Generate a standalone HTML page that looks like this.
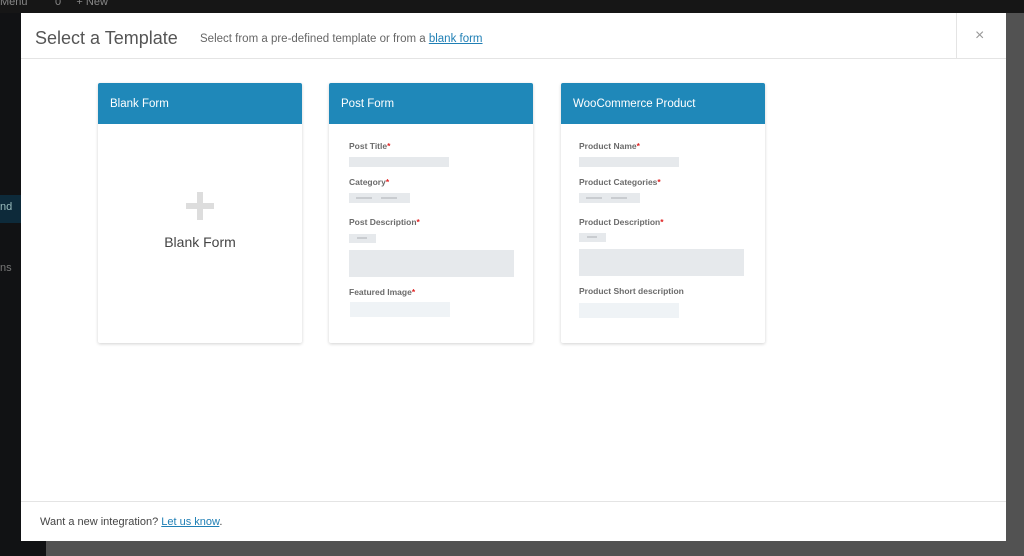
<!DOCTYPE html>
<html><head><style>
*{margin:0;padding:0;box-sizing:border-box}
body{width:1024px;height:556px;overflow:hidden;background:#525252;font-family:"Liberation Sans",sans-serif;position:relative}
.abs{position:absolute}
.topbar{left:0;top:0;width:1024px;height:13px;background:#161616}
.side{left:0;top:13px;width:46px;height:543px;background:#111214}
.modal{left:21px;top:13px;width:985px;height:528px;background:#fff}
.hdr{left:0;top:0;width:985px;height:46px;border-bottom:1px solid #e4e4e4}
.card{width:204px;height:260px;background:#fff;box-shadow:0 1px 3px rgba(0,0,0,.18);border-radius:2px;top:70px}
.ch{height:41px;background:#1f88b9;color:#fff;font-size:11.5px;padding:15px 12px 0;border-radius:2px 2px 0 0}
.lb{font-size:8.5px;font-weight:bold;color:#6b6b6b;left:20px}
.lb b{color:#e02424}
.bar{background:#e6e9ec;left:20px}
.dash{position:absolute;height:2px;background:#c9ccd0;top:4px}
</style></head><body>
<div class="abs topbar"></div>
<div class="abs side"></div>
<div class="abs" style="left:0;top:195px;width:21px;height:28px;background:#0d2a3a"></div>
<div class="abs" style="left:0;top:201px;color:#9bb;font-size:11px">nd</div>
<div class="abs" style="left:0;top:262px;color:#777;font-size:11px">ns</div>
<div class="abs" style="left:0;top:-4px;color:#888;font-size:11px">Menu &nbsp;&nbsp;&nbsp;&nbsp;&nbsp;&nbsp;&nbsp; 0 &nbsp;&nbsp;&nbsp; + New</div>
<div class="abs modal">
 <div class="abs hdr">
  <div class="abs" style="left:14px;top:15px;font-size:18px;color:#555">Select a Template</div>
  <div class="abs" style="left:179px;top:20px;font-size:11.5px;color:#666">Select from a pre-defined template or from a <span style="color:#1f7fb5;text-decoration:underline">blank form</span></div>
  <div class="abs" style="left:935px;top:0;width:1px;height:46px;background:#e4e4e4"></div>
  <div class="abs" style="left:954px;top:14px;font-size:16px;color:#999">×</div>
 </div>
 <div class="abs card" style="left:77px">
  <div class="ch">Blank Form</div>
  <div class="abs" style="left:88px;top:120px;width:28px;height:6px;background:#ddd"></div>
  <div class="abs" style="left:99px;top:109px;width:6px;height:28px;background:#ddd"></div>
  <div class="abs" style="left:0;top:151px;width:204px;text-align:center;font-size:14px;color:#444">Blank Form</div>
 </div>
 <div class="abs card" style="left:308px">
  <div class="ch">Post Form</div>
  <div class="abs lb" style="top:58px">Post Title<b>*</b></div>
  <div class="abs bar" style="top:74px;width:100px;height:10px"></div>
  <div class="abs lb" style="top:94px">Category<b>*</b></div>
  <div class="abs bar" style="top:110px;width:61px;height:10px"><i class="dash" style="left:7px;width:16px"></i><i class="dash" style="left:32px;width:16px"></i></div>
  <div class="abs lb" style="top:134px">Post Description<b>*</b></div>
  <div class="abs bar" style="top:151px;width:27px;height:9px"><i class="dash" style="left:8px;width:10px;top:3px"></i></div>
  <div class="abs bar" style="top:167px;width:165px;height:27px"></div>
  <div class="abs lb" style="top:204px">Featured Image<b>*</b></div>
  <div class="abs bar" style="top:219px;left:21px;width:100px;height:15px;background:#eff3f6"></div>
 </div>
 <div class="abs card" style="left:540px">
  <div class="ch">WooCommerce Product</div>
  <div class="abs lb" style="top:58px;left:18px">Product Name<b>*</b></div>
  <div class="abs bar" style="top:74px;left:18px;width:100px;height:10px"></div>
  <div class="abs lb" style="top:94px;left:18px">Product Categories<b>*</b></div>
  <div class="abs bar" style="top:110px;left:18px;width:61px;height:10px"><i class="dash" style="left:7px;width:16px"></i><i class="dash" style="left:32px;width:16px"></i></div>
  <div class="abs lb" style="top:134px;left:18px">Product Description<b>*</b></div>
  <div class="abs bar" style="top:150px;left:18px;width:27px;height:9px"><i class="dash" style="left:8px;width:10px;top:3px"></i></div>
  <div class="abs bar" style="top:166px;left:18px;width:165px;height:27px"></div>
  <div class="abs lb" style="top:203px;left:18px">Product Short description</div>
  <div class="abs bar" style="top:220px;left:18px;width:100px;height:15px;background:#eff3f6"></div>
 </div>
 <div class="abs" style="left:0;top:488px;width:985px;height:1px;background:#e4e4e4"></div>
 <div class="abs" style="left:19px;top:503px;font-size:11px;color:#444">Want a new integration? <span style="color:#1f7fb5;text-decoration:underline">Let us know</span>.</div>
</div>
</body></html>
